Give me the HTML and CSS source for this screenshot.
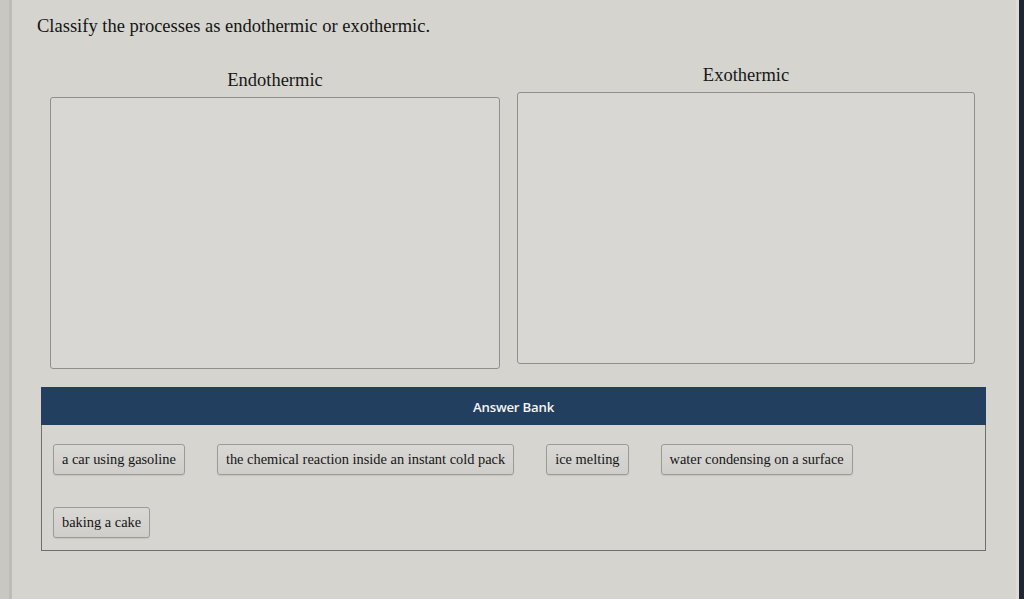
FILE: index.html
```html
<!DOCTYPE html>
<html lang="en">
<head>
<meta charset="utf-8">
<title>Classify the processes</title>
<link rel="stylesheet" href="styles.css">
</head>
<body>
<div class="frame">
  <div class="rail-left"></div>
  <main class="page">
    <h1 class="prompt">Classify the processes as endothermic or exothermic.</h1>
    <div class="targets">
      <section class="target">
        <h2 class="target-label">Endothermic</h2>
        <div class="dropzone"></div>
      </section>
      <section class="target target-right">
        <h2 class="target-label">Exothermic</h2>
        <div class="dropzone"></div>
      </section>
    </div>
    <section class="bank">
      <div class="bank-head">Answer Bank</div>
      <div class="bank-body">
        <span class="chip">a car using gasoline</span>
        <span class="chip">the chemical reaction inside an instant cold pack</span>
        <span class="chip">ice melting</span>
        <span class="chip">water condensing on a surface</span>
        <span class="chip">baking a cake</span>
      </div>
    </section>
  </main>
  <div class="rail-right"></div>
</div>
</body>
</html>
```

FILE: styles.css
```css
html, body {
  margin: 0;
  padding: 0;
  height: 100%;
}

body {
  background: #d2d1cc;
  font-family: "Liberation Serif", "Times New Roman", serif;
  color: #161616;
  overflow: hidden;
}

.frame {
  display: flex;
  height: 599px;
}

.rail-left {
  width: 9px;
  background: #c8c7c2;
  border-right: 3px solid #bdbcb7;
  flex: none;
}

.rail-right {
  width: 5px;
  flex: none;
  background: #1d2636;
  border-left: 3px solid #dedcd7;
}

.page {
  flex: 1;
  background: #d5d4cf;
  padding: 15px 0 0 25px;
}

.prompt {
  margin: 0;
  font-size: 18.5px;
  font-weight: normal;
  line-height: 22px;
  color: #141414;
}

.targets {
  display: grid;
  grid-template-columns: 450px 458px;
  column-gap: 17px;
  margin: 32px 0 0 13px;
}

.target {
  display: flex;
  flex-direction: column;
  align-items: center;
}

.target-right {
  margin-top: -5px;
}

.target-label {
  margin: 0 0 6px;
  font-size: 18.5px;
  font-weight: normal;
  line-height: 22px;
  color: #181818;
}

.dropzone {
  align-self: stretch;
  height: 270px;
  background: #d8d7d3;
  border: 1.5px solid #8f8f8c;
  border-radius: 3px;
}

.bank {
  width: 945px;
  margin: 18px 0 0 4px;
}

.bank-head {
  height: 38px;
  background: #233f5f;
  color: #f4f4f4;
  font-family: "Open Sans", "Noto Sans", sans-serif;
  font-size: 13.2px;
  font-weight: 600;
  letter-spacing: -0.2px;
  display: flex;
  align-items: center;
  justify-content: center;
  padding-top: 2px;
  box-sizing: border-box;
}

.bank-body {
  height: 126px;
  box-sizing: border-box;
  border: 1.5px solid #6f6f6f;
  border-top: none;
  background: #d6d5d0;
  padding: 19px 80px 0 11px;
  display: flex;
  flex-wrap: wrap;
  align-content: flex-start;
  column-gap: 32px;
  row-gap: 32px;
}

.chip {
  display: inline-flex;
  align-items: center;
  height: 31px;
  box-sizing: border-box;
  padding: 0 8px;
  font-size: 14.4px;
  color: #161616;
  background: linear-gradient(#d9d8d4, #cfceca);
  border: 1px solid #9b9b98;
  border-radius: 3px;
  box-shadow: 0 1px 1px rgba(0, 0, 0, 0.08);
}
```
